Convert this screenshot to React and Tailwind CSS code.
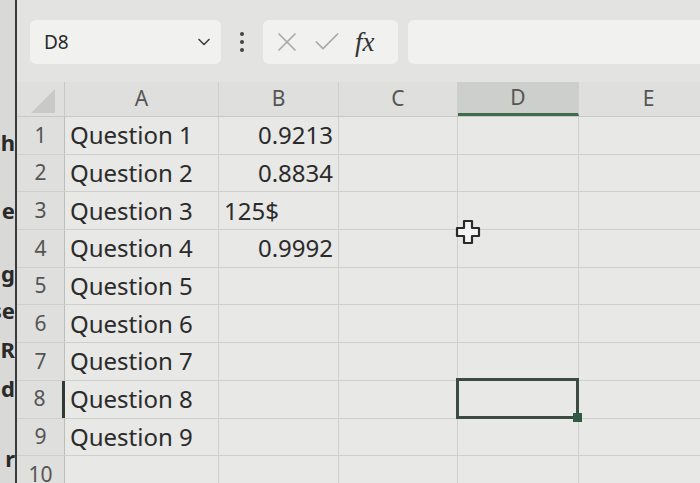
import { X, Check, ChevronDown } from 'lucide-react'

const columnas = [
  { id: 'A', w: 'w-[154px]' },
  { id: 'B', w: 'w-[120px]' },
  { id: 'C', w: 'w-[119px]' },
  { id: 'D', w: 'w-[121px]' },
  { id: 'E', w: 'w-[140px]' },
]

const filas = [
  { n: 1, a: 'Question 1', b: '0.9213' },
  { n: 2, a: 'Question 2', b: '0.8834' },
  { n: 3, a: 'Question 3', b: '125$', izq: true },
  { n: 4, a: 'Question 4', b: '0.9992' },
  { n: 5, a: 'Question 5' },
  { n: 6, a: 'Question 6' },
  { n: 7, a: 'Question 7' },
  { n: 8, a: 'Question 8' },
  { n: 9, a: 'Question 9' },
  { n: 10, a: '' },
]

// trozos de la ventana de atras, cortados por el borde
const fragmentos = [
  { t: 'ch', y: 'h-[40px]' },
  { t: '', y: 'h-[30px]' },
  { t: 'e', y: 'h-[36px]' },
  { t: '', y: 'h-[28px]' },
  { t: 'ng', y: 'h-[34px]' },
  { t: 'se', y: 'h-[40px]' },
  { t: 'R', y: 'h-[38px]' },
  { t: 'd', y: 'h-[40px]' },
  { t: '', y: 'h-[30px]' },
  { t: 'r', y: 'h-[40px]' },
]

const Cursor = () => (
  <svg width="26" height="26" viewBox="0 0 26 26" className="absolute left-[455px] top-[219px]">
    <path
      d="M9 2h8v7h7v8h-7v7H9v-7H2V9h7z"
      fill="#f4f4f4"
      stroke="#2b2b2b"
      strokeWidth="2.2"
      strokeLinejoin="round"
    />
  </svg>
)

export default function App() {
  return (
    <div
      className="w-[700px] h-[483px] overflow-hidden flex bg-[#e3e3e1] relative"
      style={{ fontFamily: '"Noto Sans", "Open Sans", sans-serif' }}
    >
      {/* ventana de fondo a la izquierda */}
      <div className="w-[17px] shrink-0 bg-[#d9d9d7] border-r-2 border-[#3b3b3b] flex flex-col items-end overflow-hidden pt-[122px]">
        {fragmentos.map((f, i) => (
          <div key={i} className={`${f.y} shrink-0 flex items-center text-[22px] font-bold text-[#2a2a2a] leading-none whitespace-nowrap`}>
            {f.t}
          </div>
        ))}
      </div>

      <div className="flex-1 flex flex-col min-w-0">
        {/* barra de formulas */}
        <div className="h-[82px] shrink-0 flex items-start pt-[20px] pl-[13px]">
          <div className="w-[191px] h-[44px] rounded-[6px] bg-[#f1f1ef] flex items-center justify-between pl-[14px] pr-[7px]">
            <span className="text-[19px] text-[#2a2a2a]">D8</span>
            <ChevronDown size={20} strokeWidth={2} className="text-[#444]" />
          </div>
          <div className="h-[44px] flex flex-col items-center justify-center gap-[4px] w-[42px]">
            <span className="w-[4px] h-[4px] rounded-full bg-[#444]" />
            <span className="w-[4px] h-[4px] rounded-full bg-[#444]" />
            <span className="w-[4px] h-[4px] rounded-full bg-[#444]" />
          </div>
          <div className="w-[135px] h-[44px] rounded-[6px] bg-[#f1f1ef] flex items-center pl-[8px] gap-[8px]">
            <X size={32} strokeWidth={1.3} className="text-[#a9a9a9]" />
            <Check size={32} strokeWidth={1.3} className="text-[#a9a9a9]" />
            <span
              className="text-[27px] italic text-[#333] leading-none ml-[4px]"
              style={{ fontFamily: '"Liberation Serif", serif' }}
            >
              fx
            </span>
          </div>
          <div className="flex-1 h-[44px] rounded-l-[6px] bg-[#f1f1ef] ml-[10px]" />
        </div>

        {/* cabecera de columnas */}
        <div className="flex h-[35px] shrink-0 bg-[#dfdfdd] border-b border-[#c8c8c6]">
          <div className="w-[48px] shrink-0 relative border-r border-[#c8c8c6]">
            <svg width="26" height="26" viewBox="0 0 26 26" className="absolute left-[14px] top-[5px]">
              <path d="M24 2v24H0z" fill="#c9c9c7" />
            </svg>
          </div>
          {columnas.map((c) => (
            <div
              key={c.id}
              className={`${c.w} shrink-0 flex items-center justify-center text-[21px] text-[#555] border-r border-[#cfcfcd] ${
                c.id === 'D' ? 'bg-[#cdcfcc] border-b-[3px] border-b-[#3f6b4e] text-[#3f6b4e]' : ''
              }`}
            >
              {c.id}
            </div>
          ))}
        </div>

        {/* filas */}
        <div className="flex flex-col relative">
          {filas.map((f) => (
            <div key={f.n} className="flex h-[37.7px] shrink-0 border-b border-[#cfcfcd]">
              <div
                className={`w-[48px] shrink-0 flex items-center justify-center text-[21px] text-[#555] bg-[#dfdfdd] border-r border-[#bdbdbb] ${
                  f.n === 8 ? 'bg-[#d0d2cf] border-r-[3px] border-r-[#2f3a33] text-[#3f6b4e]' : ''
                }`}
              >
                {f.n}
              </div>
              <div className="w-[154px] shrink-0 flex items-center pl-[5px] text-[24px] text-[#2b2b2b] border-r border-[#cfcfcd] bg-[#e8e8e6] whitespace-nowrap">
                {f.a}
              </div>
              <div
                className={`w-[120px] shrink-0 flex items-center text-[24px] text-[#2b2b2b] border-r border-[#cfcfcd] bg-[#e8e8e6] ${
                  f.izq ? 'justify-start pl-[5px]' : 'justify-end pr-[5px]'
                }`}
              >
                {f.b}
              </div>
              <div className="w-[119px] shrink-0 border-r border-[#cfcfcd] bg-[#e8e8e6]" />
              <div className={`w-[121px] shrink-0 border-r border-[#cfcfcd] bg-[#e8e8e6] relative ${f.n === 8 ? 'z-10' : ''}`}>
                {f.n === 8 && (
                  <div className="absolute -left-[2px] -top-[3px] -right-[1px] -bottom-[1px] border-[3px] border-[#3d4a42]">
                    <span className="absolute -right-[6px] -bottom-[6px] w-[9px] h-[9px] bg-[#2f5a43]" />
                  </div>
                )}
              </div>
              <div className="flex-1 bg-[#e8e8e6]" />
            </div>
          ))}
        </div>
      </div>
      <Cursor />
    </div>
  )
}
